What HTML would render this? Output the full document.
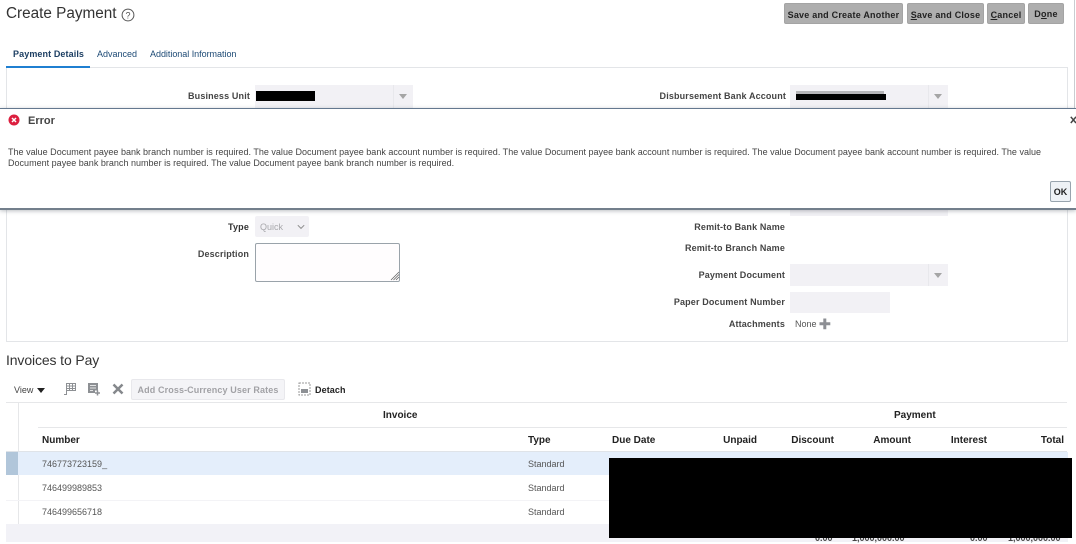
<!DOCTYPE html>
<html lang="en">
<head>
<meta charset="utf-8">
<title>Create Payment</title>
<style>
html,body{margin:0;padding:0;background:#fff}
body{width:1076px;height:542px;position:relative;overflow:hidden;font-family:"Liberation Sans",sans-serif;color:#333}
.a{position:absolute;white-space:nowrap}
.btn{position:absolute;top:3px;height:21px;background:#aeaeae;border:1px solid #a4a4a4;border-radius:2px;box-sizing:border-box;font:bold 9px/22px "Liberation Sans",sans-serif;color:#222;text-align:center;letter-spacing:.22px;white-space:nowrap}
.lbl{position:absolute;text-align:right;font:bold 9px/12px "Liberation Sans",sans-serif;color:#444;letter-spacing:.15px;white-space:nowrap}
.fld{position:absolute;background:#f2f1f5}
.arr{position:absolute;width:0;height:0;border-left:4px solid transparent;border-right:4px solid transparent;border-top:5px solid #a5a5a5}
.th{position:absolute;top:435px;font:bold 10px/12px "Liberation Sans",sans-serif;color:#222;white-space:nowrap}
.td{position:absolute;font:9px/12px "Liberation Sans",sans-serif;color:#555;white-space:nowrap}
.line{position:absolute;background:#e6e7e9}
</style>
</head>
<body>
<div class="a" style="left:6px;top:4px;font-size:15.3px;line-height:20px;color:#333">Create Payment</div>
<svg class="a" style="left:121px;top:8px" width="14" height="14" viewBox="0 0 14 14"><circle cx="7" cy="7" r="5.9" fill="none" stroke="#555" stroke-width="1"/><text x="7" y="10.3" text-anchor="middle" font-family="Liberation Sans" font-size="9" fill="#555">?</text></svg>

<div class="btn" style="left:784px;width:119px">Save and Create Another</div>
<div class="btn" style="left:907px;width:77px"><u>S</u>ave and Close</div>
<div class="btn" style="left:987px;width:38px"><u>C</u>ancel</div>
<div class="btn" style="left:1028px;width:36px;line-height:21px">D<u>o</u>ne</div>
<div class="a" style="left:1074px;top:0;width:1px;height:108px;background:#c9ccd0"></div>

<div class="a" style="left:13px;top:48px;font:bold 9px/12px 'Liberation Sans',sans-serif;color:#1d3f63;letter-spacing:.1px">Payment Details</div>
<div class="a" style="left:97px;top:48px;font:9px/12px 'Liberation Sans',sans-serif;color:#1d4a75">Advanced</div>
<div class="a" style="left:150px;top:48px;font:9px/12px 'Liberation Sans',sans-serif;color:#1d4a75;letter-spacing:-.03px">Additional Information</div>

<div class="a" style="left:6px;top:67px;width:1062px;height:275px;box-sizing:border-box;border:1px solid #e3e5e8"></div>
<div class="a" style="left:6px;top:66px;width:84px;height:2px;background:#1f7fd1"></div>

<div class="lbl" style="right:826px;top:90px">Business Unit</div>
<div class="fld" style="left:255px;top:85px;width:158px;height:23px"></div>
<div class="a" style="left:393px;top:85px;width:1px;height:23px;background:#e8e8ec"></div>
<div class="arr" style="left:399px;top:94px"></div>
<div class="a" style="left:256px;top:91px;width:59px;height:10px;background:#000"></div>

<div class="lbl" style="right:290px;top:90px">Disbursement Bank Account</div>
<div class="fld" style="left:790px;top:85px;width:158px;height:23px"></div>
<div class="a" style="left:928px;top:85px;width:1px;height:23px;background:#e8e8ec"></div>
<div class="arr" style="left:934px;top:94px"></div>
<div class="a" style="left:796px;top:91px;width:88px;height:3px;background:#b5b5b8"></div>
<div class="a" style="left:796px;top:94px;width:90px;height:6px;background:#000"></div>

<div class="fld" style="left:790px;top:205px;width:158px;height:11px"></div>

<div class="lbl" style="right:827px;top:221px;color:#333">Type</div>
<div class="fld" style="left:255px;top:216px;width:54px;height:21px;border-radius:2px"></div>
<div class="a" style="left:260px;top:221px;font:9px/12px 'Liberation Sans',sans-serif;color:#a8a8ac">Quick</div>
<svg class="a" style="left:297px;top:224px" width="8" height="6" viewBox="0 0 8 6"><path d="M.8 1.2 4 4.4 7.2 1.2" fill="none" stroke="#8e8e8e" stroke-width="1"/></svg>

<div class="lbl" style="right:827px;top:248px">Description</div>
<div class="a" style="left:255px;top:243px;width:145px;height:39px;box-sizing:border-box;border:1px solid #9aa3aa;border-radius:2px;background:#fffdfe"></div>
<svg class="a" style="left:390px;top:271px" width="10" height="10" viewBox="0 0 10 10"><path d="M1 9 9 1M3.500 9 9 3.500M6 9 9 6" stroke="#666" stroke-width=".8" fill="none"/></svg>

<div class="lbl" style="right:291px;top:221px">Remit-to Bank Name</div>
<div class="lbl" style="right:291px;top:242px">Remit-to Branch Name</div>
<div class="lbl" style="right:291px;top:269px">Payment Document</div>
<div class="fld" style="left:790px;top:264px;width:158px;height:22px"></div>
<div class="a" style="left:928px;top:264px;width:1px;height:22px;background:#e8e8ec"></div>
<div class="arr" style="left:934px;top:273px"></div>
<div class="lbl" style="right:291px;top:296px">Paper Document Number</div>
<div class="fld" style="left:790px;top:292px;width:100px;height:21px"></div>
<div class="lbl" style="right:291px;top:318px">Attachments</div>
<div class="a" style="left:795px;top:318px;font:9px/12px 'Liberation Sans',sans-serif;color:#555">None</div>
<svg class="a" style="left:819px;top:318px" width="12" height="12" viewBox="0 0 12 12"><path d="M4.300 .5h3v3.800h4v3h-4v4h-3v-4H.5v-3h3.800z" fill="#8d8f94"/></svg>

<div class="a" style="left:0;top:108px;width:1076px;height:102px;box-sizing:border-box;background:#fff;border-top:1px solid #64788f;border-bottom:2px solid #737f8c;box-shadow:0 1px 4px rgba(60,70,80,.35)"></div>
<svg class="a" style="left:8px;top:114px" width="12" height="12" viewBox="0 0 12 12"><circle cx="6" cy="6" r="5.500" fill="#dc1f3f"/><path d="M4 4 8 8M8 4 4 8" stroke="#fff" stroke-width="1.500"/></svg>
<div class="a" style="left:28px;top:114px;font:bold 11px/14px 'Liberation Sans',sans-serif;color:#444">Error</div>
<svg class="a" style="left:1070px;top:116px" width="6" height="8" viewBox="0 0 6 8"><path d="M.8 .8 6 7M6 .8 .8 7" stroke="#444" stroke-width="1.500" fill="none"/></svg>
<div class="a" style="left:8px;top:147px;width:1045px;font:9px/11px 'Liberation Sans',sans-serif;color:#444;white-space:normal;letter-spacing:.015px">The value Document payee bank branch number is required. The value Document payee bank account number is required. The value Document payee bank account number is required. The value Document payee bank account number is required. The value Document payee bank branch number is required. The value Document payee bank branch number is required.</div>
<div class="a" style="left:1050px;top:181px;width:21px;height:21px;box-sizing:border-box;background:#eef2f6;border:1px solid #98a4ae;border-radius:2px;font:bold 9px/20px 'Liberation Sans',sans-serif;color:#222;text-align:center">OK</div>

<div class="a" style="left:6px;top:351px;font-size:14px;line-height:18px;color:#333;letter-spacing:-.12px">Invoices to Pay</div>

<div class="a" style="left:14px;top:384px;font:9px/12px 'Liberation Sans',sans-serif;color:#444">View</div>
<div class="a" style="left:37px;top:388px;width:0;height:0;border-left:4px solid transparent;border-right:4px solid transparent;border-top:5px solid #222"></div>
<svg class="a" style="left:63px;top:382px" width="14" height="14" viewBox="0 0 14 14"><path d="M3.500 1.500h9v7h-9zM3.500 4h9M3.500 6.500h9M6.500 1.500v7M9.500 1.500v7M3.500 9v3.500H1" fill="none" stroke="#8d9094" stroke-width="1"/></svg>
<svg class="a" style="left:87px;top:382px" width="14" height="14" viewBox="0 0 14 14"><path d="M1 1h10v7.500H8v2.500H1z" fill="#8d9094"/><path d="M3 3.500h6M3 6h6M3 8.500h3" stroke="#fff" stroke-width=".8"/><path d="M10.500 8.500v5M8 11h5" stroke="#8d9094" stroke-width="1.500"/></svg>
<svg class="a" style="left:112px;top:383px" width="12" height="12" viewBox="0 0 12 12"><path d="M1.500 1.500 10.500 10.500M10.500 1.500 1.500 10.500" stroke="#85888c" stroke-width="2.500"/></svg>
<div class="a" style="left:131px;top:379px;width:154px;height:21px;box-sizing:border-box;background:#f4f4f7;border:1px solid #e8e8ec;border-radius:2px;font:bold 9px/20px 'Liberation Sans',sans-serif;color:#a2a2a6;text-align:center;letter-spacing:.12px">Add Cross-Currency User Rates</div>
<svg class="a" style="left:298px;top:382px" width="13" height="14" viewBox="0 0 13 14"><path d="M1 1h11v12H1z" fill="none" stroke="#999" stroke-width="1" stroke-dasharray="2 1"/><path d="M3 7h7v4H3z" fill="#8d9094"/></svg>
<div class="a" style="left:315px;top:384px;font:bold 9px/12px 'Liberation Sans',sans-serif;color:#222;letter-spacing:.1px">Detach</div>

<div class="line" style="left:6px;top:402px;width:1061px;height:1px"></div>
<div class="line" style="left:18px;top:402px;width:1px;height:122px"></div>
<div class="a" style="left:383px;top:410px;font:bold 10px/12px 'Liberation Sans',sans-serif;color:#222">Invoice</div>
<div class="a" style="left:894px;top:410px;font:bold 10px/12px 'Liberation Sans',sans-serif;color:#222">Payment</div>
<div class="line" style="left:38px;top:427px;width:1029px;height:1px"></div>
<div class="th" style="left:42px">Number</div>
<div class="th" style="left:528px">Type</div>
<div class="th" style="left:612px">Due Date</div>
<div class="th" style="right:319px">Unpaid</div>
<div class="th" style="right:242px">Discount</div>
<div class="th" style="right:165px">Amount</div>
<div class="th" style="right:89px">Interest</div>
<div class="th" style="right:12px">Total</div>
<div class="line" style="left:6px;top:451px;width:1061px;height:1px;background:#dfe3e8"></div>

<div class="a" style="left:18px;top:452px;width:1050px;height:23px;background:#e4eefb"></div>
<div class="a" style="left:6px;top:452px;width:12px;height:23px;background:#b1c6da"></div>
<div class="line" style="left:6px;top:500px;width:1061px;height:1px;background:#f3f3f6"></div>
<div class="a" style="left:6px;top:524px;width:1062px;height:18px;background:#f2f2f7"></div>

<div class="td" style="left:42px;top:458px">746773723159_</div>
<div class="td" style="left:42px;top:482px">746499989853</div>
<div class="td" style="left:42px;top:506px">746499656718</div>
<div class="td" style="left:528px;top:458px">Standard</div>
<div class="td" style="left:528px;top:482px">Standard</div>
<div class="td" style="left:528px;top:506px">Standard</div>

<div class="td" style="left:815px;top:532px;font-weight:bold;color:#444">0.00</div>
<div class="td" style="left:852px;top:532px;font-weight:bold;color:#444">1,000,000.00</div>
<div class="td" style="left:970px;top:532px;font-weight:bold;color:#444">0.00</div>
<div class="td" style="left:1008px;top:532px;font-weight:bold;color:#444">1,000,000.00</div>
<div class="a" style="left:609px;top:458px;width:463px;height:80px;background:#000"></div>
</body>
</html>
